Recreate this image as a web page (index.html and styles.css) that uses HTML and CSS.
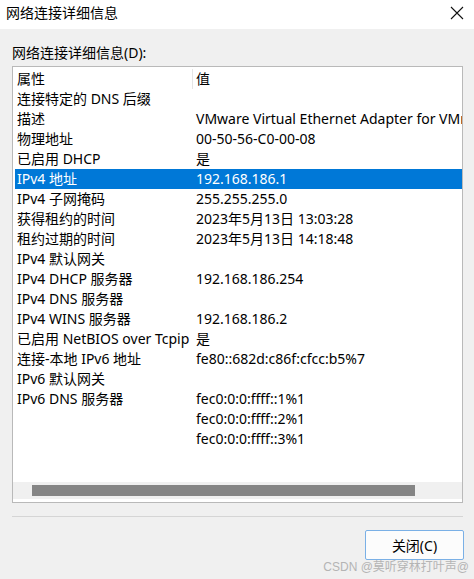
FILE: index.html
```html
<!DOCTYPE html>
<html lang="zh-CN">
<head>
    <meta charset="UTF-8">
    <title>网络连接详细信息</title>
    <link rel="stylesheet" href="styles.css">
</head>
<body>

    <div class="dialog">
        <div class="titlebar">
            <span class="title">网络连接详细信息</span>
            <svg class="close-x" width="14" height="14" viewBox="0 0 14 14">
                <path d="M1 1 L13 13 M13 1 L1 13" stroke="#111" stroke-width="1.1" fill="none"/>
            </svg>
        </div>

        <div class="content">
            <div class="label">网络连接详细信息(D):</div>

            <div class="listbox">
                <div class="rows">
                    <div class="row header"><span class="prop">属性</span><span class="val">值</span></div>
                    <div class="row"><span class="prop">连接特定的 DNS 后缀</span><span class="val"></span></div>
                    <div class="row"><span class="prop">描述</span><span class="val">VMware Virtual Ethernet Adapter for VMnet8</span></div>
                    <div class="row"><span class="prop">物理地址</span><span class="val">00-50-56-C0-00-08</span></div>
                    <div class="row"><span class="prop">已启用 DHCP</span><span class="val">是</span></div>
                    <div class="row selected"><span class="prop">IPv4 地址</span><span class="val">192.168.186.1</span></div>
                    <div class="row"><span class="prop">IPv4 子网掩码</span><span class="val">255.255.255.0</span></div>
                    <div class="row"><span class="prop">获得租约的时间</span><span class="val">2023年5月13日 13:03:28</span></div>
                    <div class="row"><span class="prop">租约过期的时间</span><span class="val">2023年5月13日 14:18:48</span></div>
                    <div class="row"><span class="prop">IPv4 默认网关</span><span class="val"></span></div>
                    <div class="row"><span class="prop">IPv4 DHCP 服务器</span><span class="val">192.168.186.254</span></div>
                    <div class="row"><span class="prop">IPv4 DNS 服务器</span><span class="val"></span></div>
                    <div class="row"><span class="prop">IPv4 WINS 服务器</span><span class="val">192.168.186.2</span></div>
                    <div class="row"><span class="prop">已启用 NetBIOS over Tcpip</span><span class="val">是</span></div>
                    <div class="row"><span class="prop">连接-本地 IPv6 地址</span><span class="val">fe80::682d:c86f:cfcc:b5%7</span></div>
                    <div class="row"><span class="prop">IPv6 默认网关</span><span class="val"></span></div>
                    <div class="row"><span class="prop">IPv6 DNS 服务器</span><span class="val">fec0:0:0:ffff::1%1</span></div>
                    <div class="row"><span class="prop"></span><span class="val">fec0:0:0:ffff::2%1</span></div>
                    <div class="row"><span class="prop"></span><span class="val">fec0:0:0:ffff::3%1</span></div>
                </div>
                <div class="hscroll">
                    <div class="thumb"></div>
                </div>
            </div>

            <div class="separator"></div>

            <div class="buttons">
                <button class="btn">关闭(C)</button>
            </div>
        </div>

        <div class="watermark">CSDN @莫听穿林打叶声@</div>
    </div>

</body>
</html>
```

FILE: styles.css
```css
body {
    margin: 0;
    background-color: #f0f0f0;
    font-family: "Noto Sans", "Noto Sans CJK SC", sans-serif;
    font-size: 14px;
    color: #000;
}
.dialog {
    position: relative;
    width: 474px;
    height: 579px;
    overflow: hidden;
}
.titlebar {
    height: 29px;
    background-color: #fff;
    display: flex;
    align-items: center;
    justify-content: space-between;
    padding: 0 10px 0 6px;
}
.title {
    font-size: 14px;
    line-height: 20px;
    margin-top: -3px;
}
.close-x {
    margin-top: -3px;
}
.content {
    padding: 0 11px 0 12px;
}
.label {
    height: 20px;
    line-height: 20px;
    margin-top: 14px;
}
.listbox {
    margin-top: 3px;
    height: 435px;
    border: 1px solid #b9b9b9;
    background-color: #fff;
    display: flex;
    flex-direction: column;
    justify-content: space-between;
}
.rows {
    padding: 2px 0 0 2px;
}
.row {
    display: flex;
    height: 20px;
    line-height: 20px;
    white-space: nowrap;
    overflow: hidden;
}
.prop {
    width: 175px;
    flex-shrink: 0;
    padding-left: 2px;
}
.val {
    padding-left: 4px;
}
.header .val {
    border-left: 1px solid #e5e5e5;
    padding-left: 3px;
}
.selected {
    background-color: #0078d7;
    color: #fff;
}
.hscroll {
    height: 17px;
    background-color: #f0f0f0;
    display: flex;
    align-items: center;
    margin-bottom: 3px;
}
.thumb {
    margin-left: 19px;
    width: 383px;
    height: 11px;
    background-color: #858585;
}
.separator {
    margin-top: 13px;
    height: 1px;
    background-color: #d5d5d5;
}
.buttons {
    display: flex;
    justify-content: flex-end;
    margin-top: 13px;
}
.btn {
    width: 99px;
    height: 30px;
    margin-right: -1px;
    background-color: #fcfcfc;
    border: 1px solid #7ab0e6;
    border-radius: 2px;
    font-family: "Noto Sans", "Noto Sans CJK SC", sans-serif;
    font-size: 14px;
    color: #000;
    padding: 0;
}
.watermark {
    position: absolute;
    right: 5px;
    bottom: 5px;
    font-family: "Liberation Sans", "Noto Sans CJK SC", sans-serif;
    font-size: 12px;
    color: #b4b4b4;
}
```
